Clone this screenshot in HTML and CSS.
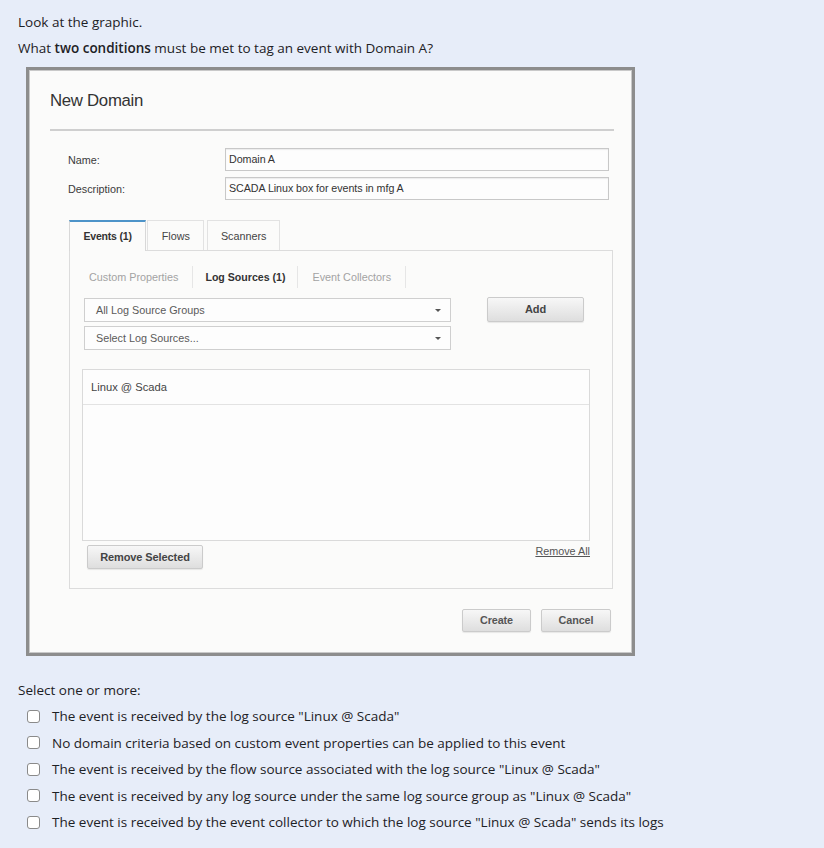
FILE: index.html
```html
<!DOCTYPE html>
<html>
<head>
<meta charset="utf-8">
<link rel="stylesheet" href="styles.css">
</head>
<body>
<div class="page">
  <div class="qtext">
    <p>Look at the graphic.</p>
    <p>What <b>two conditions</b> must be met to tag an event with Domain A?</p>
  </div>
  <div class="shot">
    <div class="dlg-title">New Domain</div>
    <div class="dlg-rule"></div>
    <div class="form">
      <div class="frow"><span class="flabel">Name:</span><div class="finput">Domain A</div></div>
      <div class="frow"><span class="flabel">Description:</span><div class="finput">SCADA Linux box for events in mfg A</div></div>
    </div>
    <div class="tabs">
      <div class="tab active">Events (1)</div>
      <div class="tab t-flows">Flows</div>
      <div class="tab t-scan">Scanners</div>
    </div>
    <div class="panel">
      <div class="subtabs">
        <span class="subtab dim">Custom Properties</span>
        <span class="subtab on">Log Sources (1)</span>
        <span class="subtab dim">Event Collectors</span>
      </div>
      <div class="selrow">
        <div class="sels">
          <div class="sel"><span>All Log Source Groups</span><i class="caret"></i></div>
          <div class="sel"><span>Select Log Sources...</span><i class="caret"></i></div>
        </div>
        <div class="btn add">Add</div>
      </div>
      <div class="list">
        <div class="litem">Linux @ Scada</div>
      </div>
      <div class="listfoot">
        <div class="btn rmsel">Remove Selected</div>
        <span class="rmall">Remove All</span>
      </div>
    </div>
    <div class="dlg-foot">
      <div class="btn create">Create</div>
      <div class="btn cancel">Cancel</div>
    </div>
  </div>
  <div class="answer">
    <p class="prompt">Select one or more:</p>
    <div class="opt"><span class="cb"></span><span>The event is received by the log source "Linux @ Scada"</span></div>
    <div class="opt"><span class="cb"></span><span>No domain criteria based on custom event properties can be applied to this event</span></div>
    <div class="opt"><span class="cb"></span><span>The event is received by the flow source associated with the log source "Linux @ Scada"</span></div>
    <div class="opt"><span class="cb"></span><span>The event is received by any log source under the same log source group as "Linux @ Scada"</span></div>
    <div class="opt"><span class="cb"></span><span>The event is received by the event collector to which the log source "Linux @ Scada" sends its logs</span></div>
  </div>
</div>
</body>
</html>
```

FILE: styles.css
```css
html, body {
  margin: 0;
  background: #e7edf9;
}
body {
  font-family: "Open Sans", "Noto Sans", sans-serif;
  font-size: 13.5px;
  color: #1d2125;
}
.page {
  padding: 12px 0 0 18px;
}
.qtext p {
  margin: 0 0 6px 0;
  line-height: 20px;
}
.qtext b {
  font-weight: 600;
}
.shot {
  box-sizing: border-box;
  width: 609px;
  height: 589px;
  margin: 9px 0 0 8px;
  border: 3px solid #8d8d8d;
  box-shadow: inset 0 0 0 1px #c9c9c9;
  background: #fbfbfa;
  padding: 0 18px 0 21px;
  font-family: "Liberation Sans", Arial, sans-serif;
  color: #333;
}
.dlg-title {
  margin-top: 21px;
  line-height: 20px;
  font-size: 16.8px;
  letter-spacing: -0.3px;
  color: #333;
}
.dlg-rule {
  margin-top: 18px;
  border-top: 2px solid #cfcfcf;
}
.form {
  padding: 17px 5px 0 18px;
}
.frow {
  display: flex;
  align-items: center;
  margin-bottom: 6px;
}
.flabel {
  width: 157px;
  font-size: 10.8px;
  color: #3a3a3a;
}
.finput {
  box-sizing: border-box;
  flex: 1;
  height: 23px;
  line-height: 21px;
  border: 1px solid #c8c8c8;
  box-shadow: inset 0 1px 1px #ececec;
  background: #fdfdfd;
  padding-left: 3px;
  font-size: 10.7px;
  letter-spacing: -0.05px;
  color: #333;
}
.tabs {
  display: flex;
  gap: 1px;
  margin: 20px 0 0 19px;
  position: relative;
  z-index: 1;
}
.tab {
  box-sizing: border-box;
  height: 30px;
  line-height: 30px;
  padding: 0 13.5px;
  border: 1px solid #e2e2e2;
  border-bottom: none;
  font-size: 10.8px;
  color: #444;
  background: #fbfbfa;
}
.t-scan {
  padding: 0 12.5px;
  margin-left: 2px;
}
.tab.active {
  height: 31px;
  line-height: 29px;
  border-top: 2px solid #4d94c9;
  border-color: #d8d8d8;
  border-top-color: #4d94c9;
  font-weight: bold;
  font-size: 10.5px;
  letter-spacing: -0.2px;
  color: #333;
  padding: 0 13.5px;
}
.panel {
  box-sizing: border-box;
  height: 339px;
  margin: -1px 1px 0 19px;
  border: 1px solid #dcdcdc;
  padding: 15px 22px 0 12px;
}
.subtabs {
  display: flex;
  height: 22px;
  margin-left: 7px;
}
.subtab {
  line-height: 22px;
  font-size: 10.8px;
  padding-right: 14px;
  margin-right: 12px;
  border-right: 1px solid #e6e6e6;
}
.subtab.on {
  padding-right: 12px;
  margin-right: 14px;
  font-size: 10.6px;
}
.subtab.dim {
  color: #a3a3a3;
}
.subtab.on {
  font-weight: bold;
  color: #333;
}
.selrow {
  display: flex;
  align-items: flex-start;
  margin: 10px 0 0 2px;
}
.sels {
  display: flex;
  flex-direction: column;
  gap: 4px;
  width: 367px;
}
.sel {
  box-sizing: border-box;
  height: 24px;
  border: 1px solid #cfcfcf;
  background: #fdfdfd;
  display: flex;
  align-items: center;
  justify-content: space-between;
  padding: 0 9px 0 11px;
  font-size: 10.8px;
  color: #5a5a5a;
}
.caret {
  width: 0;
  height: 0;
  border-left: 3px solid transparent;
  border-right: 3px solid transparent;
  border-top: 3px solid #555;
}
.btn {
  box-sizing: border-box;
  border: 1px solid #cbcbcb;
  border-radius: 2px;
  background: linear-gradient(#f7f7f7, #dedede);
  box-shadow: 0 1px 1px rgba(0,0,0,0.08);
  text-align: center;
  font-size: 11px;
  font-weight: bold;
  letter-spacing: -0.1px;
  color: #444;
}
.add {
  width: 97px;
  height: 25px;
  line-height: 23px;
  margin: -1px 0 0 36px;
}
.list {
  box-sizing: border-box;
  height: 172px;
  margin-top: 19px;
  border: 1px solid #dadada;
  background: #fdfdfd;
}
.litem {
  height: 34px;
  line-height: 34px;
  border-bottom: 1px solid #e3e3e3;
  padding-left: 8px;
  font-size: 11.2px;
  color: #444;
}
.listfoot {
  display: flex;
  justify-content: space-between;
  align-items: flex-start;
  padding-left: 5px;
}
.rmsel {
  width: 116px;
  height: 24px;
  line-height: 22px;
  margin-top: 4px;
}
.rmall {
  margin-top: 4px;
  font-size: 10.8px;
  color: #555;
  text-decoration: underline;
}
.dlg-foot {
  display: flex;
  justify-content: flex-end;
  gap: 10px;
  margin: 20px 3px 0 0;
}
.create, .cancel {
  height: 23px;
  line-height: 21px;
  font-size: 10.8px;
  font-weight: bold;
  color: #555;
}
.create { width: 69px; }
.cancel { width: 70px; }
.answer {
  margin-top: 24px;
}
.prompt {
  margin: 0;
  line-height: 20px;
}
.opt {
  display: flex;
  align-items: center;
  height: 26.5px;
  padding-left: 9px;
}
.opt:first-of-type {
  margin-top: 3px;
}
.cb {
  box-sizing: border-box;
  width: 13px;
  height: 13px;
  border: 1px solid #8a8a8a;
  border-radius: 3px;
  background: #fff;
  margin-right: 12px;
  flex: none;
}
```
